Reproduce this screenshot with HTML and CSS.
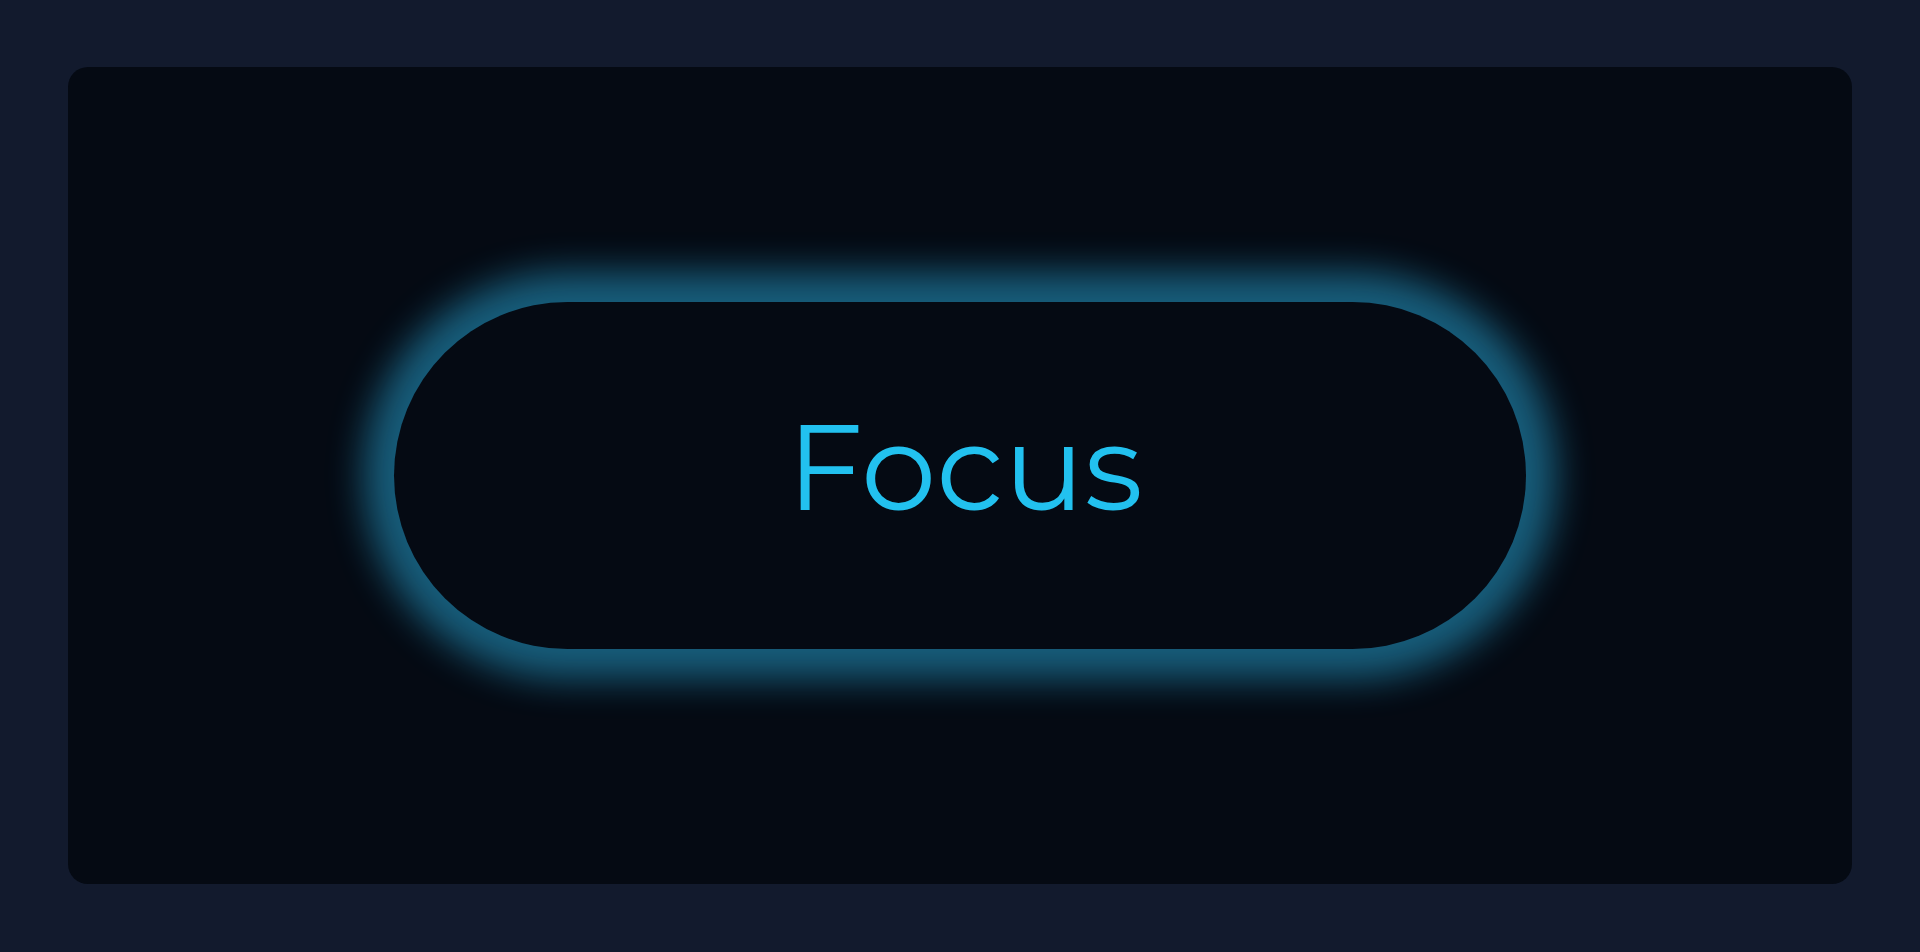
FILE: index.html
```html
<!DOCTYPE html>
<html lang="en">
<head>
<meta charset="utf-8">
<title>Focus</title>
<link rel="stylesheet" href="styles.css">
</head>
<body>
<main class="stage">
  <div class="panel">
    <button class="focus-btn" type="button"><span class="label">Focus</span></button>
  </div>
</main>
</body>
</html>
```
FILE: styles.css
```css
* { box-sizing: border-box; }
html, body { margin: 0; height: 100%; }
body {
  background: #121a2d;
  font-family: Montserrat, "Inter", "Noto Sans", sans-serif;
}
.stage {
  height: 952px;
  padding: 67px 68px 68px;
  display: flex;
}
.panel {
  flex: 1;
  background: #050a13;
  border-radius: 20px;
  display: flex;
  align-items: center;
  justify-content: center;
}
.focus-btn {
  width: 1132px;
  height: 347px;
  border: none;
  border-radius: 9999px;
  background: #050a13;
  box-shadow: 0 0 36px 30px rgba(44, 184, 236, 0.48);
  display: flex;
  align-items: center;
  justify-content: center;
  padding: 0;
  cursor: pointer;
}
.label {
  font-family: Montserrat, "Inter", "Noto Sans", sans-serif;
  font-weight: 400;
  font-size: 120px;
  line-height: 1;
  color: #22c1ef;
  padding-bottom: 17px;
  padding-left: 10px;
}
```
